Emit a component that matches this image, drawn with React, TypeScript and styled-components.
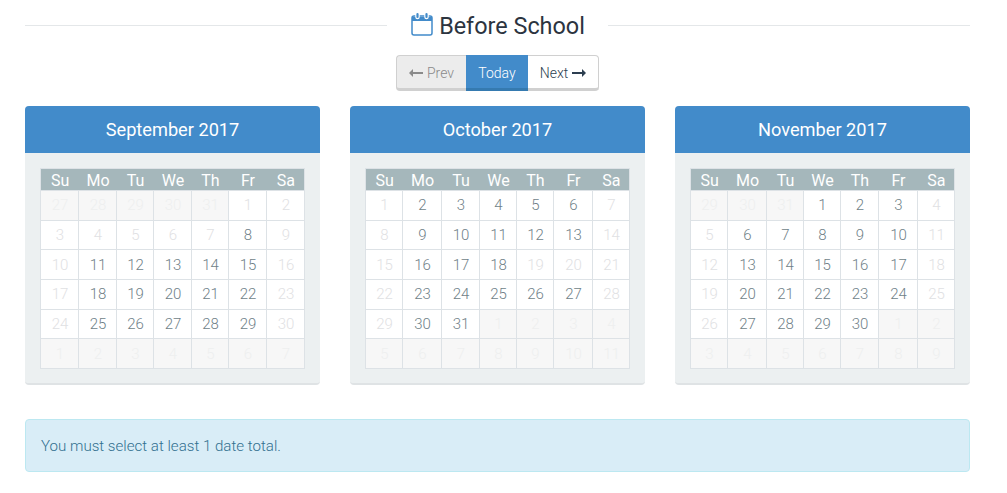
import React from 'react';
import styled, { createGlobalStyle } from 'styled-components';

const Global = createGlobalStyle`
  body {
    margin: 0;
    background: #fff;
    font-family: Roboto, "Liberation Sans", sans-serif;
    font-weight: 300;
    color: #2c3e50;
  }
`;

const Page = styled.div`
  padding: 0 37px 0 25px;
  width: 945px;
`;

const TitleRow = styled.div`
  display: flex;
  align-items: center;
  height: 51px;
`;

const Rule = styled.div`
  flex: 1;
  height: 1px;
  background: #e4e7e9;
`;

const Title = styled.h2`
  display: flex;
  align-items: center;
  gap: 6px;
  margin: 0 23px 0 24px;
  padding-top: 1px;
  font-size: 23.4px;
  font-weight: 400;
  line-height: 30px;
  color: #2c3440;
`;

const IconSvg = styled.svg`
  margin-bottom: 4px;
`;

const Pager = styled.div`
  display: flex;
  justify-content: center;
  margin-top: 4px;
`;

const PageButton = styled.button<{ $kind: 'prev' | 'today' | 'next' }>`
  display: flex;
  align-items: center;
  justify-content: center;
  gap: 4px;
  height: 36px;
  padding: 2px 0 0;
  box-sizing: border-box;
  font: 300 14px Roboto, sans-serif;
  width: ${p => (p.$kind === 'prev' ? 70 : p.$kind === 'today' ? 62 : 71)}px;
  border-style: solid;
  border-width: ${p => (p.$kind === 'today' ? '0 0 3px' : p.$kind === 'prev' ? '1px 0 3px 1px' : '1px 1px 3px 0')};
  border-color: ${p => (p.$kind === 'today' ? '#357ab0' : '#d0d0d0')};
  border-radius: ${p => (p.$kind === 'prev' ? '4px 0 0 4px' : p.$kind === 'next' ? '0 4px 4px 0' : '0')};
  background: ${p => (p.$kind === 'today' ? '#428bca' : p.$kind === 'prev' ? '#ececec' : '#fff')};
  color: ${p => (p.$kind === 'today' ? '#fff' : p.$kind === 'prev' ? '#8a8a8a' : '#2c3e50')};
`;

const Months = styled.div`
  display: flex;
  justify-content: space-between;
  margin-top: 15px;
`;

const Card = styled.section`
  width: 295px;
  height: 279px;
  box-sizing: border-box;
  background: #ecf0f1;
  border-radius: 4px;
  border-bottom: 2px solid #dfe3e5;
  overflow: hidden;
`;

const CardHead = styled.h3`
  margin: 0;
  height: 47px;
  background: #428bca;
  color: #fff;
  text-align: center;
  font-size: 18.2px;
  font-weight: 400;
  line-height: 47px;
`;

const CardBody = styled.div`
  padding: 15px;
`;

const Table = styled.table`
  width: 265px;
  border-collapse: collapse;
  background: #fff;
  table-layout: fixed;
`;

const HeadCell = styled.th`
  height: 21px;
  padding: 2px 0 0 1px;
  box-sizing: border-box;
  background: #a5b7bb;
  border: 0;
  border-top: 1px solid #dde2e6;
  color: #fff;
  font-size: 16px;
  font-weight: 400;
  line-height: 19px;
  text-align: center;

  &:first-child {
    border-left: 1px solid #dde2e6;
  }

  &:last-child {
    border-right: 1px solid #dde2e6;
  }
`;

const DayCell = styled.td<{ $tone: 'on' | 'off' | 'out' }>`
  height: 29.7px;
  box-sizing: border-box;
  padding: 0 0 0 1px;
  border: 1px solid #dde2e6;
  text-align: center;
  font-size: 15px;
  font-weight: 300;
  background: ${p => (p.$tone === 'out' ? '#f7f7f7' : '#fff')};
  color: ${p => (p.$tone === 'on' ? '#6f7f88' : p.$tone === 'off' ? '#dfe1e3' : '#eeefef')};
`;

const Notice = styled.div`
  margin-top: 34px;
  height: 53px;
  box-sizing: border-box;
  background: #d9edf7;
  border: 1px solid #bce8f1;
  border-radius: 4px;
  padding: 0 15px;
  color: #31708f;
  font-size: 15.1px;
  line-height: 52px;
`;

const CalendarIcon = () => (
  <IconSvg width="22" height="24" viewBox="0 0 22 24" fill="none" stroke="#428bca" strokeWidth="1.5">
    <rect x="1" y="4" width="20" height="19" rx="2" />
    <path d="M1 7h20" strokeWidth="4" />
    <path d="M6.5 2v3M15.5 2v3" stroke="#fff" strokeWidth="4.5" strokeLinecap="round" />
    <path d="M6.5 2v3M15.5 2v3" strokeWidth="2.2" strokeLinecap="round" />
  </IconSvg>
);

const Arrow = ({ left, color }: { left?: boolean; color: string }) => (
  <svg width="14" height="8" viewBox="0 0 14 8" fill={color}>
    {left ? <path d="M4 0v3h10v2H4v3L0 4z" /> : <path d="M10 0v3H0v2h10v3l4-4z" />}
  </svg>
);

type Month = {
  name: string;
  lead: number[];
  total: number;
  on: number[];
  cols: number[];
};

const heads = ['Su', 'Mo', 'Tu', 'We', 'Th', 'Fr', 'Sa'];

const range = (from: number, to: number) => {
  const out: number[] = [];
  for (let i = from; i <= to; i++) out.push(i);
  return out;
};

const months: Month[] = [
  {
    name: 'September 2017',
    lead: range(27, 31),
    total: 30,
    on: [8, ...range(11, 15), ...range(18, 22), ...range(25, 29)],
    cols: [38, 38, 37, 38, 37, 38, 38],
  },
  {
    name: 'October 2017',
    lead: [],
    total: 31,
    on: [...range(2, 6), ...range(9, 13), ...range(16, 18), ...range(23, 27), ...range(30, 31)],
    cols: [37, 39, 38, 37, 37, 39, 37],
  },
  {
    name: 'November 2017',
    lead: range(29, 31),
    total: 30,
    on: [...range(1, 3), ...range(6, 10), ...range(13, 17), ...range(20, 24), ...range(27, 30)],
    cols: [37, 39, 37, 37, 38, 39, 37],
  },
];

const buildRows = (m: Month) => {
  const cells: { day: number; tone: 'on' | 'off' | 'out' }[] = [];
  m.lead.forEach(day => cells.push({ day, tone: 'out' }));
  range(1, m.total).forEach(day => cells.push({ day, tone: m.on.includes(day) ? 'on' : 'off' }));
  let next = 1;
  while (cells.length < 42) cells.push({ day: next++, tone: 'out' });
  return range(0, 5).map(r => cells.slice(r * 7, r * 7 + 7));
};

const App: React.FC = () => (
  <Page>
    <Global />
    <TitleRow>
      <Rule />
      <Title>
        <CalendarIcon />
        Before School
      </Title>
      <Rule />
    </TitleRow>
    <Pager>
      <PageButton $kind="prev">
        <Arrow left color="#8a8a8a" />
        Prev
      </PageButton>
      <PageButton $kind="today">Today</PageButton>
      <PageButton $kind="next">
        Next
        <Arrow color="#2c3e50" />
      </PageButton>
    </Pager>
    <Months>
      {months.map(m => (
        <Card key={m.name}>
          <CardHead>{m.name}</CardHead>
          <CardBody>
            <Table>
              <colgroup>
                {m.cols.map((w, i) => (
                  <col key={i} width={w} />
                ))}
              </colgroup>
              <thead>
                <tr>
                  {heads.map(h => (
                    <HeadCell key={h}>{h}</HeadCell>
                  ))}
                </tr>
              </thead>
              <tbody>
                {buildRows(m).map((row, i) => (
                  <tr key={i}>
                    {row.map((c, j) => (
                      <DayCell key={j} $tone={c.tone}>
                        {c.day}
                      </DayCell>
                    ))}
                  </tr>
                ))}
              </tbody>
            </Table>
          </CardBody>
        </Card>
      ))}
    </Months>
    <Notice>You must select at least 1 date total.</Notice>
  </Page>
);

export default App;
